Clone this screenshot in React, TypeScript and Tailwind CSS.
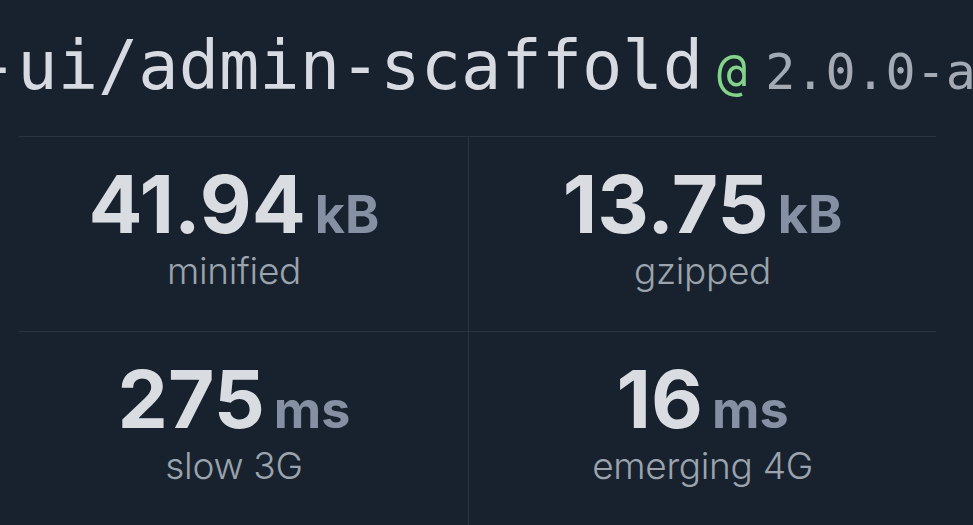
const stats = [
  [
    { value: "41.94", unit: "kB", label: "minified" },
    { value: "13.75", unit: "kB", label: "gzipped" },
  ],
  [
    { value: "275", unit: "ms", label: "slow 3G" },
    { value: "16", unit: "ms", label: "emerging 4G" },
  ],
];

function Stat({ value, unit, label }: { value: string; unit: string; label: string }) {
  return (
    <div className="flex flex-col items-center">
      <div className="flex items-baseline leading-none">
        <span className="text-[80px] font-bold text-[#d9dce1]">{value}</span>
        <span className="ml-[9px] text-[52px] font-bold text-[#8591a3]">{unit}</span>
      </div>
      <div className="mt-[5px] text-[37px] leading-[1.2] font-light tracking-[-0.3px] text-[#9ba3ad]">{label}</div>
    </div>
  );
}

export default function App() {
  return (
    <div
      className="h-[525px] w-[973px] overflow-hidden bg-[#18222e]"
      style={{ fontFamily: "Inter, 'Noto Sans', sans-serif" }}
    >
      <div className="flex items-baseline whitespace-nowrap pt-[33px] leading-none font-['DejaVu_Sans_Mono',monospace]">
        <span className="ml-[-23px] text-[67px] text-[#d7dbe1]">-ui/admin-scaffold</span>
        <span className="ml-[14px] text-[50px] text-[#84d38a]">@</span>
        <span className="ml-[18px] text-[50px] text-[#a3aab4]">2.0.0-alpha.1</span>
      </div>

      <div className="mt-[36px] ml-[19px] w-[917px]">
        {stats.map((row, i) => (
          <div key={i} className="grid grid-cols-[449px_468px] border-t border-[#2a3441]">
            <div className="h-[194px] pt-[27px] pr-[19px]">
              <Stat {...row[0]} />
            </div>
            <div className="h-[194px] border-l border-[#2a3441] pt-[27px]">
              <Stat {...row[1]} />
            </div>
          </div>
        ))}
      </div>
    </div>
  );
}
